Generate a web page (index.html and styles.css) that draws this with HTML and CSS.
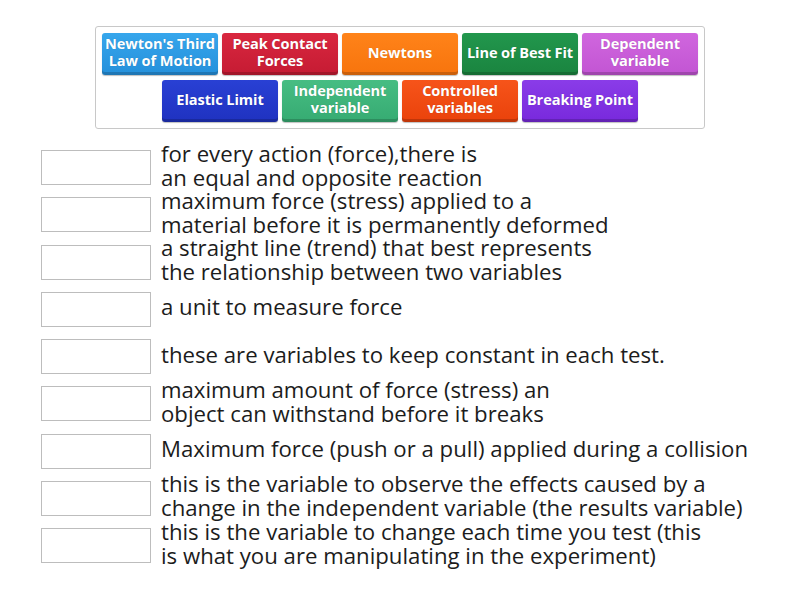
FILE: index.html
```html
<!DOCTYPE html>
<html lang="en">

<head>
    <meta charset="UTF-8" />
    <meta name="viewport" content="width=device-width,initial-scale=1.0" />
    <title>Forces Match Up</title>
    <link rel="stylesheet" href="styles.css">
</head>

<body>
    <div class="bank">
        <div class="tile sky">Newton's Third Law of Motion</div>
        <div class="tile crimson">Peak Contact Forces</div>
        <div class="tile orange">Newtons</div>
        <div class="tile green">Line of Best Fit</div>
        <div class="tile orchid">Dependent variable</div>
        <div class="tile navy">Elastic Limit</div>
        <div class="tile mint">Independent variable</div>
        <div class="tile flame">Controlled variables</div>
        <div class="tile violet">Breaking Point</div>
    </div>

    <div class="pairs">
        <div class="pair">
            <div class="slot"></div>
            <p class="clue">for every action (force),there is<br>an equal and opposite reaction</p>
        </div>
        <div class="pair">
            <div class="slot"></div>
            <p class="clue">maximum force (stress) applied to a<br>material before it is permanently deformed</p>
        </div>
        <div class="pair">
            <div class="slot"></div>
            <p class="clue">a straight line (trend) that best represents<br>the relationship between two variables</p>
        </div>
        <div class="pair">
            <div class="slot"></div>
            <p class="clue">a unit to measure force</p>
        </div>
        <div class="pair">
            <div class="slot"></div>
            <p class="clue">these are variables to keep constant in each test.</p>
        </div>
        <div class="pair">
            <div class="slot"></div>
            <p class="clue">maximum amount of force (stress) an<br>object can withstand before it breaks</p>
        </div>
        <div class="pair">
            <div class="slot"></div>
            <p class="clue">Maximum force (push or a pull) applied during a collision</p>
        </div>
        <div class="pair">
            <div class="slot"></div>
            <p class="clue">this is the variable to observe the effects caused by a<br>change in the independent variable (the results variable)</p>
        </div>
        <div class="pair">
            <div class="slot"></div>
            <p class="clue">this is the variable to change each time you test (this<br>is what you are manipulating in the experiment)</p>
        </div>
    </div>
</body>

</html>
```

FILE: styles.css
```css
* {
    margin: 0;
    padding: 0;
    box-sizing: border-box;
}

body {
    width: 800px;
    height: 600px;
    padding-top: 26px;
    font-family: "Open Sans", "Noto Sans", sans-serif;
    background: #ffffff;
    color: #222;
    overflow: hidden;
}

/* word bank */
.bank {
    width: 610px;
    margin: 0 auto;
    padding: 6px;
    display: flex;
    flex-wrap: wrap;
    justify-content: center;
    gap: 5px 4px;
    border: 1px solid #c8c8c8;
    border-radius: 3px;
}

.tile {
    width: 116px;
    height: 42px;
    padding: 0 1px 4px;
    display: flex;
    align-items: center;
    justify-content: center;
    text-align: center;
    font-size: 14.6px;
    font-weight: 700;
    line-height: 17px;
    letter-spacing: -0.1px;
    color: #fff;
    border-radius: 3px;
    text-shadow: 0 0 1px rgba(0, 0, 0, 0.2);
    box-shadow: inset 0 -3px 0 rgba(0, 0, 0, 0.18), 0 1px 1px rgba(0, 0, 0, 0.25);
}

.sky { background: linear-gradient(#36a6ec, #2590db); }
.crimson { background: linear-gradient(#d9273f, #c51b33); }
.orange { background: linear-gradient(#ff8319, #f7740d); }
.green { background: linear-gradient(#22974d, #1a843f); }
.orchid { background: linear-gradient(#d066de, #c255d3); }
.navy { background: linear-gradient(#2940d4, #1f32c0); }
.mint { background: linear-gradient(#47bd83, #36ab72); }
.flame { background: linear-gradient(#f6541a, #ea420b); }
.violet { background: linear-gradient(#8a3ce8, #7829dc); }

/* answer rows */
.pairs {
    margin-top: 15px;
    padding-left: 41px;
}

.pair {
    height: 47.25px;
    display: flex;
    align-items: center;
    gap: 10px;
}

.slot {
    width: 110px;
    height: 35px;
    flex-shrink: 0;
    border: 1px solid #bdbdbd;
    background: #fff;
}

.clue {
    margin-top: -4px;
    font-size: 22.2px;
    line-height: 24px;
    color: #1c1c1c;
    white-space: nowrap;
}
```
